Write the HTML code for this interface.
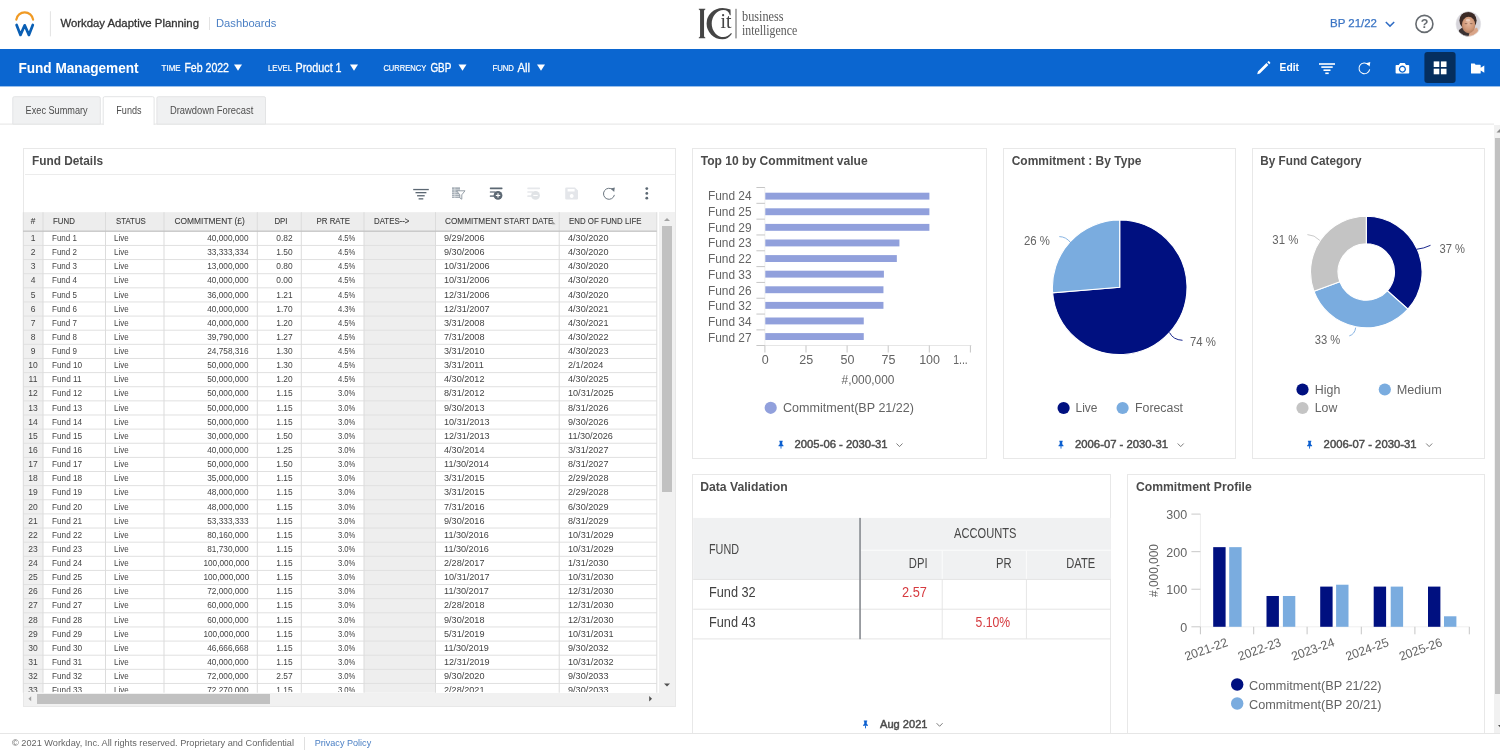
<!DOCTYPE html>
<html><head><meta charset="utf-8"><title>Fund Management</title>
<style>
*{margin:0;padding:0;box-sizing:border-box}
html,body{width:1500px;height:750px;overflow:hidden;background:#fff}
body{will-change:transform;font-family:"Liberation Sans",sans-serif;position:relative;color:#494949}
.abs{position:absolute}
.t{position:absolute;white-space:nowrap;line-height:1}
.panel{position:absolute;border:1px solid #e8e8e8;background:#fff}
.ptitle{position:absolute;white-space:nowrap;font-weight:bold;font-size:12.5px;color:#494949;line-height:14px}
.gt{position:absolute;white-space:nowrap;font-size:8.5px;line-height:10px;color:#444}
.gh{position:absolute;white-space:nowrap;font-size:8.2px;line-height:10px;color:#3d3d3d;-webkit-text-stroke:0.1px #3d3d3d}
.gl{position:absolute;left:24px;width:633px;height:1px;background:#e2e2e2}
.gv{position:absolute;width:1px;background:#dedede}
svg{position:absolute;left:0;top:0;overflow:visible}
svg text{font-family:"Liberation Sans",sans-serif}
</style></head><body>
<!-- top header -->
<div class="abs" style="left:0;top:0;width:1500px;height:49px;background:#fff"></div>
<svg width="1500" height="49" viewBox="0 0 1500 49">
  <!-- workday logo -->
  <path d="M16.3 19.6 A8.5 8.5 0 0 1 33.1 19.6" fill="none" stroke="#f09a24" stroke-width="2.2" stroke-linecap="round"/>
  <path d="M16.6 24.9 L20.5 34.9 L24.7 25.3 L28.9 34.9 L32.8 24.9" fill="none" stroke="#0a5fb4" stroke-width="2.7" stroke-linejoin="round" stroke-linecap="round"/>
  <rect x="49.9" y="11.2" width="1" height="25.2" fill="#e3e3e3"/>
  <rect x="209" y="17" width="1" height="13" fill="#e3e3e3"/>
  <!-- ICit logo -->
  <g fill="#454545">
   <path d="M698.8 8.8 h6.5 v0.7 q-1.25 0.25 -1.25 1.5 v25 q0 1.25 1.25 1.5 v0.7 h-6.5 v-0.7 q1.25 -0.25 1.25 -1.5 v-25 q0 -1.25 -1.25 -1.5 z"/>
   <path d="M730.7 15.2 L730.5 9.5 Q726.5 8 722.5 8 A15.9 15.6 0 0 0 722.5 39.2 Q728.2 39.2 731.9 33.7 L731.1 33.1 Q727.6 37.1 723.6 37.1 A11.9 13.5 0 0 1 723.6 10.1 Q728.2 10.1 729.9 15.2 Z"/>
   <text x="720.6" y="28.4" style="font-family:'Liberation Serif',serif" font-size="20" textLength="11" lengthAdjust="spacingAndGlyphs">it</text>
   <rect x="735.4" y="8.8" width="1.2" height="29.6" fill="#7a7a7a"/>
   <text x="742" y="21.4" style="font-family:'Liberation Serif',serif" font-size="13.6" textLength="41.6" lengthAdjust="spacingAndGlyphs" fill="#5a5a5a">business</text>
   <text x="742" y="35.2" style="font-family:'Liberation Serif',serif" font-size="13.6" textLength="55.2" lengthAdjust="spacingAndGlyphs" fill="#5a5a5a">intelligence</text>
  </g>
  <!-- chevron -->
  <path d="M1385.8 21.9 L1390 26.1 L1394.2 21.9" fill="none" stroke="#2f6cc4" stroke-width="1.45"/>
  <!-- help -->
  <circle cx="1424.4" cy="23.9" r="8.5" fill="none" stroke="#666b70" stroke-width="1.6"/>
  <text x="1424.5" y="28.4" font-size="12.5" font-weight="bold" text-anchor="middle" fill="#666b70">?</text>
  <!-- avatar -->
  <defs><clipPath id="av"><circle cx="1468.35" cy="24" r="12.4"/></clipPath>
  <radialGradient id="avg" cx="0.5" cy="0.4" r="0.65"><stop offset="0" stop-color="#e6b9a0"/><stop offset="0.6" stop-color="#d09878"/><stop offset="1" stop-color="#a8755a"/></radialGradient>
  <filter id="avb" x="-20%" y="-20%" width="140%" height="140%"><feGaussianBlur stdDeviation="0.7"/></filter></defs>
  <g clip-path="url(#av)"><g filter="url(#avb)">
    <rect x="1454" y="10" width="29" height="29" fill="#d6d4da"/>
    <ellipse cx="1468" cy="20.5" rx="8.6" ry="9" fill="#3a2a25"/>
    <path d="M1459 30 L1463 27 L1469 33 L1476 29 L1479 38 L1458 38 z" fill="#3a3233"/>
    <path d="M1468 38 L1470 31 L1477 27.5 L1479 33 L1474 38 z" fill="#d9a588"/>
    <ellipse cx="1468.6" cy="25" rx="6.7" ry="8.3" fill="url(#avg)"/>
    <ellipse cx="1468" cy="20.3" rx="2.2" ry="1.2" fill="#f0d5c6" opacity="0.8"/>
    <ellipse cx="1466" cy="23.6" rx="1.5" ry="0.7" fill="#7a5444" opacity="0.7"/>
    <ellipse cx="1471.2" cy="23.6" rx="1.5" ry="0.7" fill="#7a5444" opacity="0.7"/>
  </g></g>
  <circle cx="1468.35" cy="24" r="12.4" fill="none" stroke="#e6e6ea" stroke-width="0.6"/>
</svg>

<!-- blue bar -->
<div class="abs" style="left:0;top:49px;width:1500px;height:37px;background:#0b66d0"></div>
<div class="abs" style="left:0;top:86px;width:1500px;height:1px;background:#9ac0eb"></div>
<svg width="1500" height="90" viewBox="0 0 1500 90">
  <g fill="#fff">
    <path d="M234 64.5 h8 l-4 6.2 z"/>
    <path d="M350 64.5 h8 l-4 6.2 z"/>
    <path d="M458.5 64.5 h8 l-4 6.2 z"/>
    <path d="M537 64.5 h8 l-4 6.2 z"/>
    <!-- pencil -->
    <path d="M1257.2 74.3 l0.75 -2.75 l8.5 -8.5 l1.9 1.9 l-8.5 8.5 z M1267.3 62.2 l0.95 -0.95 a0.55 0.55 0 0 1 0.8 0 l1.15 1.15 a0.55 0.55 0 0 1 0 0.8 l-0.95 0.95 z"/>
    <!-- filter -->
    <rect x="1319" y="63.2" width="16" height="1.6"/><rect x="1321.3" y="66.3" width="11.4" height="1.6"/><rect x="1323.5" y="69.4" width="7" height="1.6"/><rect x="1325.3" y="72.5" width="3.4" height="1.6"/>
    <!-- grid bg -->
    <rect x="1424.4" y="52" width="31.2" height="31" rx="3" fill="#052e5e"/>
    <rect x="1433.7" y="61.4" width="5.6" height="5.6"/><rect x="1440.9" y="61.4" width="5.6" height="5.6"/><rect x="1433.7" y="68.7" width="5.6" height="5.6"/><rect x="1440.9" y="68.7" width="5.6" height="5.6"/>
    <!-- camera -->
    <path fill-rule="evenodd" d="M1396.4 65 h2.4 l1.3 -2 h4.6 l1.3 2 h2.4 a0.8 0.8 0 0 1 0.8 0.8 v7 a0.8 0.8 0 0 1 -0.8 0.8 h-12 a0.8 0.8 0 0 1 -0.8 -0.8 v-7 a0.8 0.8 0 0 1 0.8 -0.8 z M1402.4 65.6 a3.6 3.6 0 1 0 0.01 0 z M1402.4 66.9 a2.3 2.3 0 1 1 -0.01 0 z"/>
    <!-- video -->
    <path d="M1471 63.5 h3.6 l1 1.3 h4.4 a0.7 0.7 0 0 1 0.7 0.7 v2.2 l3.6 -2.3 v7.4 l-3.6 -2.3 v2.4 a0.7 0.7 0 0 1 -0.7 0.7 h-8.3 a0.7 0.7 0 0 1 -0.7 -0.7 z"/>
  </g>
  <!-- refresh -->
  <path d="M1368.3 64.6 A5.4 5.4 0 1 0 1369.7 69.4" fill="none" stroke="#fff" stroke-width="1.05"/>
  <path d="M1366 63.2 l4.3 -1.2 l-0.7 4.6 z" fill="#fff"/>
</svg>

<!-- tabs -->
<svg width="1500" height="130" viewBox="0 0 1500 130">
 <rect x="0" y="123.6" width="1494" height="1" fill="#e4e4e4"/>
 <path d="M12.8 124.1 V98.2 a1.5 1.5 0 0 1 1.5 -1.5 H98.8 a1.5 1.5 0 0 1 1.5 1.5 V124.1 z" fill="#f0f1f2" stroke="#e3e4e5" stroke-width="1"/>
 <path d="M156.9 124.1 V98.2 a1.5 1.5 0 0 1 1.5 -1.5 H264 a1.5 1.5 0 0 1 1.5 1.5 V124.1 z" fill="#f0f1f2" stroke="#e3e4e5" stroke-width="1"/>
 <path d="M103.2 125 V98.2 a1.5 1.5 0 0 1 1.5 -1.5 H152.6 a1.5 1.5 0 0 1 1.5 1.5 V125" fill="#fff" stroke="#e3e4e5" stroke-width="1"/>
</svg>
<svg width="1500" height="130" viewBox="0 0 1500 130">
 <g font-family="Liberation Sans" lengthAdjust="spacingAndGlyphs">
  <text x="60.4" y="26.9" font-size="11.4" fill="#333" stroke="#333" stroke-width="0.3" textLength="138.6" lengthAdjust="spacingAndGlyphs">Workday Adaptive Planning</text>
  <text x="216" y="26.9" font-size="11.4" fill="#4a7fc4" textLength="60.4" lengthAdjust="spacingAndGlyphs">Dashboards</text>
  <text x="1330" y="27.4" font-size="11.6" fill="#3a74c4" stroke="#3a74c4" stroke-width="0.25" textLength="47" lengthAdjust="spacingAndGlyphs">BP 21/22</text>
  <text x="18.4" y="72.5" font-size="14.8" font-weight="bold" fill="#fff" textLength="120.2" lengthAdjust="spacingAndGlyphs">Fund Management</text>
  <text x="161.6" y="71.3" font-size="9.2" fill="#fff" stroke="#fff" stroke-width="0.2" textLength="19" lengthAdjust="spacingAndGlyphs">TIME</text>
  <text x="184.4" y="72" font-size="12.2" fill="#fff" stroke="#fff" stroke-width="0.3" textLength="44.6" lengthAdjust="spacingAndGlyphs">Feb 2022</text>
  <text x="268" y="71.3" font-size="9.2" fill="#fff" stroke="#fff" stroke-width="0.2" textLength="24" lengthAdjust="spacingAndGlyphs">LEVEL</text>
  <text x="295.6" y="72" font-size="12.2" fill="#fff" stroke="#fff" stroke-width="0.3" textLength="46" lengthAdjust="spacingAndGlyphs">Product 1</text>
  <text x="383.4" y="71.3" font-size="9.2" fill="#fff" stroke="#fff" stroke-width="0.2" textLength="43" lengthAdjust="spacingAndGlyphs">CURRENCY</text>
  <text x="430.4" y="72" font-size="12.2" fill="#fff" stroke="#fff" stroke-width="0.3" textLength="21" lengthAdjust="spacingAndGlyphs">GBP</text>
  <text x="492.4" y="71.3" font-size="9.2" fill="#fff" stroke="#fff" stroke-width="0.2" textLength="21.6" lengthAdjust="spacingAndGlyphs">FUND</text>
  <text x="517.4" y="72" font-size="12.2" fill="#fff" stroke="#fff" stroke-width="0.3" textLength="12.6" lengthAdjust="spacingAndGlyphs">All</text>
  <text x="1279.6" y="71.2" font-size="11.6" font-weight="bold" fill="#fff" textLength="19.4" lengthAdjust="spacingAndGlyphs">Edit</text>
  <text x="25.6" y="113.6" font-size="10" fill="#4d4d4d" textLength="62.1" lengthAdjust="spacingAndGlyphs">Exec Summary</text>
  <text x="116.3" y="113.6" font-size="10" fill="#4d4d4d" textLength="25.2" lengthAdjust="spacingAndGlyphs">Funds</text>
  <text x="169.9" y="113.6" font-size="10" fill="#4d4d4d" textLength="83.4" lengthAdjust="spacingAndGlyphs">Drawdown Forecast</text>
 </g>
</svg>
<!-- panels -->
<div class="panel" style="left:23px;top:148px;width:653px;height:559px"></div>
<div class="panel" style="left:691.5px;top:148px;width:295.5px;height:310.5px"></div>
<div class="panel" style="left:1003px;top:148px;width:233px;height:310.5px"></div>
<div class="panel" style="left:1252px;top:148px;width:233px;height:310.5px"></div>
<div class="panel" style="left:692px;top:474px;width:419px;height:280px"></div>
<div class="panel" style="left:1127px;top:474px;width:358px;height:280px"></div>
<svg width="1500" height="500" viewBox="0 0 1500 500"><g font-family="Liberation Sans" font-weight="bold" font-size="13.4" fill="#4b4b4b">
<text x="32" y="164.6" textLength="71" lengthAdjust="spacingAndGlyphs">Fund Details</text>
<text x="700.7" y="164.6" textLength="167" lengthAdjust="spacingAndGlyphs">Top 10 by Commitment value</text>
<text x="1011.7" y="164.6" textLength="129.7" lengthAdjust="spacingAndGlyphs">Commitment : By Type</text>
<text x="1260.3" y="164.6" textLength="101.2" lengthAdjust="spacingAndGlyphs">By Fund Category</text>
<text x="700.2" y="490.9" textLength="87.4" lengthAdjust="spacingAndGlyphs">Data Validation</text>
<text x="1135.9" y="490.9" textLength="115.9" lengthAdjust="spacingAndGlyphs">Commitment Profile</text>
</g></svg>
<div class="abs" style="left:24.5px;top:173.5px;width:650.5px;height:1px;background:#ececec"></div>
<!-- toolbar icons -->
<svg width="700" height="215" viewBox="0 0 700 215">
  <g fill="#5c6873">
    <rect x="413.2" y="188.9" width="15.6" height="1.3"/><rect x="415.5" y="192" width="10.9" height="1.3"/><rect x="417.1" y="195.1" width="7.6" height="1.3"/><rect x="418.6" y="198.2" width="4.7" height="1.3"/>
  </g>
  <!-- filter edit -->
  <g>
    <rect x="452" y="187.3" width="8" height="10.7" fill="#a7afb7"/>
    <g fill="#eceef0"><rect x="452" y="189.6" width="8" height="0.6"/><rect x="452" y="191.9" width="8" height="0.6"/><rect x="452" y="194.2" width="8" height="0.6"/><rect x="452" y="196.3" width="8" height="0.6"/><rect x="454.6" y="187.3" width="0.6" height="10.7"/></g>
    <path d="M456.6 190.8 h8.4 l-3.2 4 v4.4 l-2 -1.3 v-3.1 z" fill="#fff" stroke="#8a949e" stroke-width="0.9" stroke-linejoin="round"/>
  </g>
  <!-- add row -->
  <g fill="#5c6873">
    <rect x="489.8" y="187.5" width="12.7" height="1.7" rx="0.6"/><rect x="489.8" y="191.2" width="6" height="1.6" rx="0.5" fill="#7d8791"/><rect x="489.8" y="195.3" width="4.5" height="1.7" rx="0.5" fill="#7d8791"/>
    <circle cx="498" cy="195.4" r="4.4"/>
    <rect x="495.8" y="194.9" width="4.4" height="1.1" fill="#fff"/><rect x="497.45" y="193.2" width="1.1" height="4.4" fill="#fff"/>
  </g>
  <!-- remove row (disabled) -->
  <g fill="#e6e8eb">
    <rect x="527.3" y="187.5" width="12.7" height="1.7" rx="0.6"/><rect x="527.3" y="191.2" width="6" height="1.6" rx="0.5"/><rect x="527.3" y="195.3" width="4.5" height="1.7" rx="0.5"/>
    <circle cx="535.5" cy="195.4" r="4.4" fill="#e0e3e6"/>
    <rect x="533.3" y="194.9" width="4.4" height="1.1" fill="#fff"/>
  </g>
  <!-- save (disabled) -->
  <path fill-rule="evenodd" d="M566.2 187.4 h8.8 l3 3 v8 a1 1 0 0 1 -1 1 h-10.8 a1 1 0 0 1 -1 -1 v-10 a1 1 0 0 1 1 -1 z M567.6 188.9 v2.6 h7 v-2.6 z M571.7 194.1 a1.9 1.9 0 1 0 0.01 0 z" fill="#e4e6ea"/>
  <!-- refresh -->
  <path d="M612.9 189.9 A5.5 5.5 0 1 0 614.4 194.9" fill="none" stroke="#6b7680" stroke-width="1"/>
  <path d="M610.6 188.5 l4.2 -1.1 l-0.6 4.5 z" fill="#6b7680"/>
  <!-- more -->
  <g fill="#5c6873"><circle cx="646.8" cy="188.6" r="1.4"/><circle cx="646.8" cy="193.4" r="1.4"/><circle cx="646.8" cy="198.2" r="1.4"/></g>
</svg>
<svg width="700" height="750" viewBox="0 0 700 750">
<rect x="23" y="212.2" width="633.8" height="19.1" fill="#ededed"/>
<rect x="23" y="231.3" width="20" height="461.4" fill="#f0f0f0"/>
<rect x="364" y="231.3" width="71.5" height="461.4" fill="#eeeeee"/>
<rect x="23" y="244.93" width="633.8" height="1" fill="#e0e0e0"/>
<rect x="23" y="259.06" width="633.8" height="1" fill="#e0e0e0"/>
<rect x="23" y="273.19" width="633.8" height="1" fill="#e0e0e0"/>
<rect x="23" y="287.32" width="633.8" height="1" fill="#e0e0e0"/>
<rect x="23" y="301.45" width="633.8" height="1" fill="#e0e0e0"/>
<rect x="23" y="315.58" width="633.8" height="1" fill="#e0e0e0"/>
<rect x="23" y="329.71" width="633.8" height="1" fill="#e0e0e0"/>
<rect x="23" y="343.84" width="633.8" height="1" fill="#e0e0e0"/>
<rect x="23" y="357.97" width="633.8" height="1" fill="#e0e0e0"/>
<rect x="23" y="372.10" width="633.8" height="1" fill="#e0e0e0"/>
<rect x="23" y="386.23" width="633.8" height="1" fill="#e0e0e0"/>
<rect x="23" y="400.36" width="633.8" height="1" fill="#e0e0e0"/>
<rect x="23" y="414.49" width="633.8" height="1" fill="#e0e0e0"/>
<rect x="23" y="428.62" width="633.8" height="1" fill="#e0e0e0"/>
<rect x="23" y="442.75" width="633.8" height="1" fill="#e0e0e0"/>
<rect x="23" y="456.88" width="633.8" height="1" fill="#e0e0e0"/>
<rect x="23" y="471.01" width="633.8" height="1" fill="#e0e0e0"/>
<rect x="23" y="485.14" width="633.8" height="1" fill="#e0e0e0"/>
<rect x="23" y="499.27" width="633.8" height="1" fill="#e0e0e0"/>
<rect x="23" y="513.40" width="633.8" height="1" fill="#e0e0e0"/>
<rect x="23" y="527.53" width="633.8" height="1" fill="#e0e0e0"/>
<rect x="23" y="541.66" width="633.8" height="1" fill="#e0e0e0"/>
<rect x="23" y="555.79" width="633.8" height="1" fill="#e0e0e0"/>
<rect x="23" y="569.92" width="633.8" height="1" fill="#e0e0e0"/>
<rect x="23" y="584.05" width="633.8" height="1" fill="#e0e0e0"/>
<rect x="23" y="598.18" width="633.8" height="1" fill="#e0e0e0"/>
<rect x="23" y="612.31" width="633.8" height="1" fill="#e0e0e0"/>
<rect x="23" y="626.44" width="633.8" height="1" fill="#e0e0e0"/>
<rect x="23" y="640.57" width="633.8" height="1" fill="#e0e0e0"/>
<rect x="23" y="654.70" width="633.8" height="1" fill="#e0e0e0"/>
<rect x="23" y="668.83" width="633.8" height="1" fill="#e0e0e0"/>
<rect x="23" y="682.96" width="633.8" height="1" fill="#e0e0e0"/>
<rect x="22.8" y="212.2" width="1" height="480.5" fill="#dcdcdc"/>
<rect x="42.5" y="212.2" width="1" height="480.5" fill="#dcdcdc"/>
<rect x="105" y="212.2" width="1" height="480.5" fill="#dcdcdc"/>
<rect x="163.5" y="212.2" width="1" height="480.5" fill="#dcdcdc"/>
<rect x="256.8" y="212.2" width="1" height="480.5" fill="#dcdcdc"/>
<rect x="300.8" y="212.2" width="1" height="480.5" fill="#dcdcdc"/>
<rect x="363.5" y="212.2" width="1" height="480.5" fill="#dcdcdc"/>
<rect x="435" y="212.2" width="1" height="480.5" fill="#dcdcdc"/>
<rect x="558.7" y="212.2" width="1" height="480.5" fill="#dcdcdc"/>
<rect x="656.3" y="212.2" width="1" height="480.5" fill="#dcdcdc"/>
<rect x="23" y="230.55" width="633.8" height="1.3" fill="#c4c4c4"/>
</svg>
<div id="grid" style="position:absolute;left:0;top:231.3px;width:657.8px;height:460.5px;overflow:hidden">
<span class="gt" style="top:1.77px;left:23px;width:20px;text-align:center">1</span>
<span class="gt" style="top:1.77px;left:51.6px;transform:scaleX(0.94);transform-origin:left">Fund 1</span>
<span class="gt" style="top:1.77px;left:114.4px;transform:scaleX(0.94);transform-origin:left">Live</span>
<span class="gt" style="top:1.77px;right:408.8px;transform:scaleX(0.97);transform-origin:right">40,000,000</span>
<span class="gt" style="top:1.77px;right:364.8px;transform:scaleX(0.985);transform-origin:right">0.82</span>
<span class="gt" style="top:1.77px;right:302.1px;transform:scaleX(0.9);transform-origin:right">4.5%</span>
<span class="gt" style="top:1.77px;left:444px;transform:scaleX(1.07);transform-origin:left">9/29/2006</span>
<span class="gt" style="top:1.77px;left:568px;transform:scaleX(1.07);transform-origin:left">4/30/2020</span>
<span class="gt" style="top:15.89px;left:23px;width:20px;text-align:center">2</span>
<span class="gt" style="top:15.89px;left:51.6px;transform:scaleX(0.94);transform-origin:left">Fund 2</span>
<span class="gt" style="top:15.89px;left:114.4px;transform:scaleX(0.94);transform-origin:left">Live</span>
<span class="gt" style="top:15.89px;right:408.8px;transform:scaleX(0.97);transform-origin:right">33,333,334</span>
<span class="gt" style="top:15.89px;right:364.8px;transform:scaleX(0.985);transform-origin:right">1.50</span>
<span class="gt" style="top:15.89px;right:302.1px;transform:scaleX(0.9);transform-origin:right">4.5%</span>
<span class="gt" style="top:15.89px;left:444px;transform:scaleX(1.07);transform-origin:left">9/30/2006</span>
<span class="gt" style="top:15.89px;left:568px;transform:scaleX(1.07);transform-origin:left">4/30/2020</span>
<span class="gt" style="top:30.03px;left:23px;width:20px;text-align:center">3</span>
<span class="gt" style="top:30.03px;left:51.6px;transform:scaleX(0.94);transform-origin:left">Fund 3</span>
<span class="gt" style="top:30.03px;left:114.4px;transform:scaleX(0.94);transform-origin:left">Live</span>
<span class="gt" style="top:30.03px;right:408.8px;transform:scaleX(0.97);transform-origin:right">13,000,000</span>
<span class="gt" style="top:30.03px;right:364.8px;transform:scaleX(0.985);transform-origin:right">0.80</span>
<span class="gt" style="top:30.03px;right:302.1px;transform:scaleX(0.9);transform-origin:right">4.5%</span>
<span class="gt" style="top:30.03px;left:444px;transform:scaleX(1.07);transform-origin:left">10/31/2006</span>
<span class="gt" style="top:30.03px;left:568px;transform:scaleX(1.07);transform-origin:left">4/30/2020</span>
<span class="gt" style="top:44.16px;left:23px;width:20px;text-align:center">4</span>
<span class="gt" style="top:44.16px;left:51.6px;transform:scaleX(0.94);transform-origin:left">Fund 4</span>
<span class="gt" style="top:44.16px;left:114.4px;transform:scaleX(0.94);transform-origin:left">Live</span>
<span class="gt" style="top:44.16px;right:408.8px;transform:scaleX(0.97);transform-origin:right">40,000,000</span>
<span class="gt" style="top:44.16px;right:364.8px;transform:scaleX(0.985);transform-origin:right">0.00</span>
<span class="gt" style="top:44.16px;right:302.1px;transform:scaleX(0.9);transform-origin:right">4.5%</span>
<span class="gt" style="top:44.16px;left:444px;transform:scaleX(1.07);transform-origin:left">10/31/2006</span>
<span class="gt" style="top:44.16px;left:568px;transform:scaleX(1.07);transform-origin:left">4/30/2020</span>
<span class="gt" style="top:58.29px;left:23px;width:20px;text-align:center">5</span>
<span class="gt" style="top:58.29px;left:51.6px;transform:scaleX(0.94);transform-origin:left">Fund 5</span>
<span class="gt" style="top:58.29px;left:114.4px;transform:scaleX(0.94);transform-origin:left">Live</span>
<span class="gt" style="top:58.29px;right:408.8px;transform:scaleX(0.97);transform-origin:right">36,000,000</span>
<span class="gt" style="top:58.29px;right:364.8px;transform:scaleX(0.985);transform-origin:right">1.21</span>
<span class="gt" style="top:58.29px;right:302.1px;transform:scaleX(0.9);transform-origin:right">4.5%</span>
<span class="gt" style="top:58.29px;left:444px;transform:scaleX(1.07);transform-origin:left">12/31/2006</span>
<span class="gt" style="top:58.29px;left:568px;transform:scaleX(1.07);transform-origin:left">4/30/2020</span>
<span class="gt" style="top:72.42px;left:23px;width:20px;text-align:center">6</span>
<span class="gt" style="top:72.42px;left:51.6px;transform:scaleX(0.94);transform-origin:left">Fund 6</span>
<span class="gt" style="top:72.42px;left:114.4px;transform:scaleX(0.94);transform-origin:left">Live</span>
<span class="gt" style="top:72.42px;right:408.8px;transform:scaleX(0.97);transform-origin:right">40,000,000</span>
<span class="gt" style="top:72.42px;right:364.8px;transform:scaleX(0.985);transform-origin:right">1.70</span>
<span class="gt" style="top:72.42px;right:302.1px;transform:scaleX(0.9);transform-origin:right">4.3%</span>
<span class="gt" style="top:72.42px;left:444px;transform:scaleX(1.07);transform-origin:left">12/31/2007</span>
<span class="gt" style="top:72.42px;left:568px;transform:scaleX(1.07);transform-origin:left">4/30/2021</span>
<span class="gt" style="top:86.55px;left:23px;width:20px;text-align:center">7</span>
<span class="gt" style="top:86.55px;left:51.6px;transform:scaleX(0.94);transform-origin:left">Fund 7</span>
<span class="gt" style="top:86.55px;left:114.4px;transform:scaleX(0.94);transform-origin:left">Live</span>
<span class="gt" style="top:86.55px;right:408.8px;transform:scaleX(0.97);transform-origin:right">40,000,000</span>
<span class="gt" style="top:86.55px;right:364.8px;transform:scaleX(0.985);transform-origin:right">1.20</span>
<span class="gt" style="top:86.55px;right:302.1px;transform:scaleX(0.9);transform-origin:right">4.5%</span>
<span class="gt" style="top:86.55px;left:444px;transform:scaleX(1.07);transform-origin:left">3/31/2008</span>
<span class="gt" style="top:86.55px;left:568px;transform:scaleX(1.07);transform-origin:left">4/30/2021</span>
<span class="gt" style="top:100.68px;left:23px;width:20px;text-align:center">8</span>
<span class="gt" style="top:100.68px;left:51.6px;transform:scaleX(0.94);transform-origin:left">Fund 8</span>
<span class="gt" style="top:100.68px;left:114.4px;transform:scaleX(0.94);transform-origin:left">Live</span>
<span class="gt" style="top:100.68px;right:408.8px;transform:scaleX(0.97);transform-origin:right">39,790,000</span>
<span class="gt" style="top:100.68px;right:364.8px;transform:scaleX(0.985);transform-origin:right">1.27</span>
<span class="gt" style="top:100.68px;right:302.1px;transform:scaleX(0.9);transform-origin:right">4.5%</span>
<span class="gt" style="top:100.68px;left:444px;transform:scaleX(1.07);transform-origin:left">7/31/2008</span>
<span class="gt" style="top:100.68px;left:568px;transform:scaleX(1.07);transform-origin:left">4/30/2022</span>
<span class="gt" style="top:114.81px;left:23px;width:20px;text-align:center">9</span>
<span class="gt" style="top:114.81px;left:51.6px;transform:scaleX(0.94);transform-origin:left">Fund 9</span>
<span class="gt" style="top:114.81px;left:114.4px;transform:scaleX(0.94);transform-origin:left">Live</span>
<span class="gt" style="top:114.81px;right:408.8px;transform:scaleX(0.97);transform-origin:right">24,758,316</span>
<span class="gt" style="top:114.81px;right:364.8px;transform:scaleX(0.985);transform-origin:right">1.30</span>
<span class="gt" style="top:114.81px;right:302.1px;transform:scaleX(0.9);transform-origin:right">4.5%</span>
<span class="gt" style="top:114.81px;left:444px;transform:scaleX(1.07);transform-origin:left">3/31/2010</span>
<span class="gt" style="top:114.81px;left:568px;transform:scaleX(1.07);transform-origin:left">4/30/2023</span>
<span class="gt" style="top:128.94px;left:23px;width:20px;text-align:center">10</span>
<span class="gt" style="top:128.94px;left:51.6px;transform:scaleX(0.968);transform-origin:left">Fund 10</span>
<span class="gt" style="top:128.94px;left:114.4px;transform:scaleX(0.94);transform-origin:left">Live</span>
<span class="gt" style="top:128.94px;right:408.8px;transform:scaleX(0.97);transform-origin:right">50,000,000</span>
<span class="gt" style="top:128.94px;right:364.8px;transform:scaleX(0.985);transform-origin:right">1.30</span>
<span class="gt" style="top:128.94px;right:302.1px;transform:scaleX(0.9);transform-origin:right">4.5%</span>
<span class="gt" style="top:128.94px;left:444px;transform:scaleX(1.07);transform-origin:left">3/31/2011</span>
<span class="gt" style="top:128.94px;left:568px;transform:scaleX(1.07);transform-origin:left">2/1/2024</span>
<span class="gt" style="top:143.06px;left:23px;width:20px;text-align:center">11</span>
<span class="gt" style="top:143.06px;left:51.6px;transform:scaleX(0.968);transform-origin:left">Fund 11</span>
<span class="gt" style="top:143.06px;left:114.4px;transform:scaleX(0.94);transform-origin:left">Live</span>
<span class="gt" style="top:143.06px;right:408.8px;transform:scaleX(0.97);transform-origin:right">50,000,000</span>
<span class="gt" style="top:143.06px;right:364.8px;transform:scaleX(0.985);transform-origin:right">1.20</span>
<span class="gt" style="top:143.06px;right:302.1px;transform:scaleX(0.9);transform-origin:right">4.5%</span>
<span class="gt" style="top:143.06px;left:444px;transform:scaleX(1.07);transform-origin:left">4/30/2012</span>
<span class="gt" style="top:143.06px;left:568px;transform:scaleX(1.07);transform-origin:left">4/30/2025</span>
<span class="gt" style="top:157.19px;left:23px;width:20px;text-align:center">12</span>
<span class="gt" style="top:157.19px;left:51.6px;transform:scaleX(0.968);transform-origin:left">Fund 12</span>
<span class="gt" style="top:157.19px;left:114.4px;transform:scaleX(0.94);transform-origin:left">Live</span>
<span class="gt" style="top:157.19px;right:408.8px;transform:scaleX(0.97);transform-origin:right">50,000,000</span>
<span class="gt" style="top:157.19px;right:364.8px;transform:scaleX(0.985);transform-origin:right">1.15</span>
<span class="gt" style="top:157.19px;right:302.1px;transform:scaleX(0.9);transform-origin:right">3.0%</span>
<span class="gt" style="top:157.19px;left:444px;transform:scaleX(1.07);transform-origin:left">8/31/2012</span>
<span class="gt" style="top:157.19px;left:568px;transform:scaleX(1.07);transform-origin:left">10/31/2025</span>
<span class="gt" style="top:171.32px;left:23px;width:20px;text-align:center">13</span>
<span class="gt" style="top:171.32px;left:51.6px;transform:scaleX(0.968);transform-origin:left">Fund 13</span>
<span class="gt" style="top:171.32px;left:114.4px;transform:scaleX(0.94);transform-origin:left">Live</span>
<span class="gt" style="top:171.32px;right:408.8px;transform:scaleX(0.97);transform-origin:right">50,000,000</span>
<span class="gt" style="top:171.32px;right:364.8px;transform:scaleX(0.985);transform-origin:right">1.15</span>
<span class="gt" style="top:171.32px;right:302.1px;transform:scaleX(0.9);transform-origin:right">3.0%</span>
<span class="gt" style="top:171.32px;left:444px;transform:scaleX(1.07);transform-origin:left">9/30/2013</span>
<span class="gt" style="top:171.32px;left:568px;transform:scaleX(1.07);transform-origin:left">8/31/2026</span>
<span class="gt" style="top:185.45px;left:23px;width:20px;text-align:center">14</span>
<span class="gt" style="top:185.45px;left:51.6px;transform:scaleX(0.968);transform-origin:left">Fund 14</span>
<span class="gt" style="top:185.45px;left:114.4px;transform:scaleX(0.94);transform-origin:left">Live</span>
<span class="gt" style="top:185.45px;right:408.8px;transform:scaleX(0.97);transform-origin:right">50,000,000</span>
<span class="gt" style="top:185.45px;right:364.8px;transform:scaleX(0.985);transform-origin:right">1.15</span>
<span class="gt" style="top:185.45px;right:302.1px;transform:scaleX(0.9);transform-origin:right">3.0%</span>
<span class="gt" style="top:185.45px;left:444px;transform:scaleX(1.07);transform-origin:left">10/31/2013</span>
<span class="gt" style="top:185.45px;left:568px;transform:scaleX(1.07);transform-origin:left">9/30/2026</span>
<span class="gt" style="top:199.59px;left:23px;width:20px;text-align:center">15</span>
<span class="gt" style="top:199.59px;left:51.6px;transform:scaleX(0.968);transform-origin:left">Fund 15</span>
<span class="gt" style="top:199.59px;left:114.4px;transform:scaleX(0.94);transform-origin:left">Live</span>
<span class="gt" style="top:199.59px;right:408.8px;transform:scaleX(0.97);transform-origin:right">30,000,000</span>
<span class="gt" style="top:199.59px;right:364.8px;transform:scaleX(0.985);transform-origin:right">1.50</span>
<span class="gt" style="top:199.59px;right:302.1px;transform:scaleX(0.9);transform-origin:right">3.0%</span>
<span class="gt" style="top:199.59px;left:444px;transform:scaleX(1.07);transform-origin:left">12/31/2013</span>
<span class="gt" style="top:199.59px;left:568px;transform:scaleX(1.07);transform-origin:left">11/30/2026</span>
<span class="gt" style="top:213.72px;left:23px;width:20px;text-align:center">16</span>
<span class="gt" style="top:213.72px;left:51.6px;transform:scaleX(0.968);transform-origin:left">Fund 16</span>
<span class="gt" style="top:213.72px;left:114.4px;transform:scaleX(0.94);transform-origin:left">Live</span>
<span class="gt" style="top:213.72px;right:408.8px;transform:scaleX(0.97);transform-origin:right">40,000,000</span>
<span class="gt" style="top:213.72px;right:364.8px;transform:scaleX(0.985);transform-origin:right">1.25</span>
<span class="gt" style="top:213.72px;right:302.1px;transform:scaleX(0.9);transform-origin:right">3.0%</span>
<span class="gt" style="top:213.72px;left:444px;transform:scaleX(1.07);transform-origin:left">4/30/2014</span>
<span class="gt" style="top:213.72px;left:568px;transform:scaleX(1.07);transform-origin:left">3/31/2027</span>
<span class="gt" style="top:227.84px;left:23px;width:20px;text-align:center">17</span>
<span class="gt" style="top:227.84px;left:51.6px;transform:scaleX(0.968);transform-origin:left">Fund 17</span>
<span class="gt" style="top:227.84px;left:114.4px;transform:scaleX(0.94);transform-origin:left">Live</span>
<span class="gt" style="top:227.84px;right:408.8px;transform:scaleX(0.97);transform-origin:right">50,000,000</span>
<span class="gt" style="top:227.84px;right:364.8px;transform:scaleX(0.985);transform-origin:right">1.50</span>
<span class="gt" style="top:227.84px;right:302.1px;transform:scaleX(0.9);transform-origin:right">3.0%</span>
<span class="gt" style="top:227.84px;left:444px;transform:scaleX(1.07);transform-origin:left">11/30/2014</span>
<span class="gt" style="top:227.84px;left:568px;transform:scaleX(1.07);transform-origin:left">8/31/2027</span>
<span class="gt" style="top:241.97px;left:23px;width:20px;text-align:center">18</span>
<span class="gt" style="top:241.97px;left:51.6px;transform:scaleX(0.968);transform-origin:left">Fund 18</span>
<span class="gt" style="top:241.97px;left:114.4px;transform:scaleX(0.94);transform-origin:left">Live</span>
<span class="gt" style="top:241.97px;right:408.8px;transform:scaleX(0.97);transform-origin:right">35,000,000</span>
<span class="gt" style="top:241.97px;right:364.8px;transform:scaleX(0.985);transform-origin:right">1.15</span>
<span class="gt" style="top:241.97px;right:302.1px;transform:scaleX(0.9);transform-origin:right">3.0%</span>
<span class="gt" style="top:241.97px;left:444px;transform:scaleX(1.07);transform-origin:left">3/31/2015</span>
<span class="gt" style="top:241.97px;left:568px;transform:scaleX(1.07);transform-origin:left">2/29/2028</span>
<span class="gt" style="top:256.11px;left:23px;width:20px;text-align:center">19</span>
<span class="gt" style="top:256.11px;left:51.6px;transform:scaleX(0.968);transform-origin:left">Fund 19</span>
<span class="gt" style="top:256.11px;left:114.4px;transform:scaleX(0.94);transform-origin:left">Live</span>
<span class="gt" style="top:256.11px;right:408.8px;transform:scaleX(0.97);transform-origin:right">48,000,000</span>
<span class="gt" style="top:256.11px;right:364.8px;transform:scaleX(0.985);transform-origin:right">1.15</span>
<span class="gt" style="top:256.11px;right:302.1px;transform:scaleX(0.9);transform-origin:right">3.0%</span>
<span class="gt" style="top:256.11px;left:444px;transform:scaleX(1.07);transform-origin:left">3/31/2015</span>
<span class="gt" style="top:256.11px;left:568px;transform:scaleX(1.07);transform-origin:left">2/29/2028</span>
<span class="gt" style="top:270.24px;left:23px;width:20px;text-align:center">20</span>
<span class="gt" style="top:270.24px;left:51.6px;transform:scaleX(0.968);transform-origin:left">Fund 20</span>
<span class="gt" style="top:270.24px;left:114.4px;transform:scaleX(0.94);transform-origin:left">Live</span>
<span class="gt" style="top:270.24px;right:408.8px;transform:scaleX(0.97);transform-origin:right">48,000,000</span>
<span class="gt" style="top:270.24px;right:364.8px;transform:scaleX(0.985);transform-origin:right">1.15</span>
<span class="gt" style="top:270.24px;right:302.1px;transform:scaleX(0.9);transform-origin:right">3.0%</span>
<span class="gt" style="top:270.24px;left:444px;transform:scaleX(1.07);transform-origin:left">7/31/2016</span>
<span class="gt" style="top:270.24px;left:568px;transform:scaleX(1.07);transform-origin:left">6/30/2029</span>
<span class="gt" style="top:284.37px;left:23px;width:20px;text-align:center">21</span>
<span class="gt" style="top:284.37px;left:51.6px;transform:scaleX(0.968);transform-origin:left">Fund 21</span>
<span class="gt" style="top:284.37px;left:114.4px;transform:scaleX(0.94);transform-origin:left">Live</span>
<span class="gt" style="top:284.37px;right:408.8px;transform:scaleX(0.97);transform-origin:right">53,333,333</span>
<span class="gt" style="top:284.37px;right:364.8px;transform:scaleX(0.985);transform-origin:right">1.15</span>
<span class="gt" style="top:284.37px;right:302.1px;transform:scaleX(0.9);transform-origin:right">3.0%</span>
<span class="gt" style="top:284.37px;left:444px;transform:scaleX(1.07);transform-origin:left">9/30/2016</span>
<span class="gt" style="top:284.37px;left:568px;transform:scaleX(1.07);transform-origin:left">8/31/2029</span>
<span class="gt" style="top:298.50px;left:23px;width:20px;text-align:center">22</span>
<span class="gt" style="top:298.50px;left:51.6px;transform:scaleX(0.968);transform-origin:left">Fund 22</span>
<span class="gt" style="top:298.50px;left:114.4px;transform:scaleX(0.94);transform-origin:left">Live</span>
<span class="gt" style="top:298.50px;right:408.8px;transform:scaleX(0.97);transform-origin:right">80,160,000</span>
<span class="gt" style="top:298.50px;right:364.8px;transform:scaleX(0.985);transform-origin:right">1.15</span>
<span class="gt" style="top:298.50px;right:302.1px;transform:scaleX(0.9);transform-origin:right">3.0%</span>
<span class="gt" style="top:298.50px;left:444px;transform:scaleX(1.07);transform-origin:left">11/30/2016</span>
<span class="gt" style="top:298.50px;left:568px;transform:scaleX(1.07);transform-origin:left">10/31/2029</span>
<span class="gt" style="top:312.62px;left:23px;width:20px;text-align:center">23</span>
<span class="gt" style="top:312.62px;left:51.6px;transform:scaleX(0.968);transform-origin:left">Fund 23</span>
<span class="gt" style="top:312.62px;left:114.4px;transform:scaleX(0.94);transform-origin:left">Live</span>
<span class="gt" style="top:312.62px;right:408.8px;transform:scaleX(0.97);transform-origin:right">81,730,000</span>
<span class="gt" style="top:312.62px;right:364.8px;transform:scaleX(0.985);transform-origin:right">1.15</span>
<span class="gt" style="top:312.62px;right:302.1px;transform:scaleX(0.9);transform-origin:right">3.0%</span>
<span class="gt" style="top:312.62px;left:444px;transform:scaleX(1.07);transform-origin:left">11/30/2016</span>
<span class="gt" style="top:312.62px;left:568px;transform:scaleX(1.07);transform-origin:left">10/31/2029</span>
<span class="gt" style="top:326.75px;left:23px;width:20px;text-align:center">24</span>
<span class="gt" style="top:326.75px;left:51.6px;transform:scaleX(0.968);transform-origin:left">Fund 24</span>
<span class="gt" style="top:326.75px;left:114.4px;transform:scaleX(0.94);transform-origin:left">Live</span>
<span class="gt" style="top:326.75px;right:408.8px;transform:scaleX(0.97);transform-origin:right">100,000,000</span>
<span class="gt" style="top:326.75px;right:364.8px;transform:scaleX(0.985);transform-origin:right">1.15</span>
<span class="gt" style="top:326.75px;right:302.1px;transform:scaleX(0.9);transform-origin:right">3.0%</span>
<span class="gt" style="top:326.75px;left:444px;transform:scaleX(1.07);transform-origin:left">2/28/2017</span>
<span class="gt" style="top:326.75px;left:568px;transform:scaleX(1.07);transform-origin:left">1/31/2030</span>
<span class="gt" style="top:340.88px;left:23px;width:20px;text-align:center">25</span>
<span class="gt" style="top:340.88px;left:51.6px;transform:scaleX(0.968);transform-origin:left">Fund 25</span>
<span class="gt" style="top:340.88px;left:114.4px;transform:scaleX(0.94);transform-origin:left">Live</span>
<span class="gt" style="top:340.88px;right:408.8px;transform:scaleX(0.97);transform-origin:right">100,000,000</span>
<span class="gt" style="top:340.88px;right:364.8px;transform:scaleX(0.985);transform-origin:right">1.15</span>
<span class="gt" style="top:340.88px;right:302.1px;transform:scaleX(0.9);transform-origin:right">3.0%</span>
<span class="gt" style="top:340.88px;left:444px;transform:scaleX(1.07);transform-origin:left">10/31/2017</span>
<span class="gt" style="top:340.88px;left:568px;transform:scaleX(1.07);transform-origin:left">10/31/2030</span>
<span class="gt" style="top:355.01px;left:23px;width:20px;text-align:center">26</span>
<span class="gt" style="top:355.01px;left:51.6px;transform:scaleX(0.968);transform-origin:left">Fund 26</span>
<span class="gt" style="top:355.01px;left:114.4px;transform:scaleX(0.94);transform-origin:left">Live</span>
<span class="gt" style="top:355.01px;right:408.8px;transform:scaleX(0.97);transform-origin:right">72,000,000</span>
<span class="gt" style="top:355.01px;right:364.8px;transform:scaleX(0.985);transform-origin:right">1.15</span>
<span class="gt" style="top:355.01px;right:302.1px;transform:scaleX(0.9);transform-origin:right">3.0%</span>
<span class="gt" style="top:355.01px;left:444px;transform:scaleX(1.07);transform-origin:left">11/30/2017</span>
<span class="gt" style="top:355.01px;left:568px;transform:scaleX(1.07);transform-origin:left">12/31/2030</span>
<span class="gt" style="top:369.14px;left:23px;width:20px;text-align:center">27</span>
<span class="gt" style="top:369.14px;left:51.6px;transform:scaleX(0.968);transform-origin:left">Fund 27</span>
<span class="gt" style="top:369.14px;left:114.4px;transform:scaleX(0.94);transform-origin:left">Live</span>
<span class="gt" style="top:369.14px;right:408.8px;transform:scaleX(0.97);transform-origin:right">60,000,000</span>
<span class="gt" style="top:369.14px;right:364.8px;transform:scaleX(0.985);transform-origin:right">1.15</span>
<span class="gt" style="top:369.14px;right:302.1px;transform:scaleX(0.9);transform-origin:right">3.0%</span>
<span class="gt" style="top:369.14px;left:444px;transform:scaleX(1.07);transform-origin:left">2/28/2018</span>
<span class="gt" style="top:369.14px;left:568px;transform:scaleX(1.07);transform-origin:left">12/31/2030</span>
<span class="gt" style="top:383.28px;left:23px;width:20px;text-align:center">28</span>
<span class="gt" style="top:383.28px;left:51.6px;transform:scaleX(0.968);transform-origin:left">Fund 28</span>
<span class="gt" style="top:383.28px;left:114.4px;transform:scaleX(0.94);transform-origin:left">Live</span>
<span class="gt" style="top:383.28px;right:408.8px;transform:scaleX(0.97);transform-origin:right">60,000,000</span>
<span class="gt" style="top:383.28px;right:364.8px;transform:scaleX(0.985);transform-origin:right">1.15</span>
<span class="gt" style="top:383.28px;right:302.1px;transform:scaleX(0.9);transform-origin:right">3.0%</span>
<span class="gt" style="top:383.28px;left:444px;transform:scaleX(1.07);transform-origin:left">9/30/2018</span>
<span class="gt" style="top:383.28px;left:568px;transform:scaleX(1.07);transform-origin:left">12/31/2030</span>
<span class="gt" style="top:397.41px;left:23px;width:20px;text-align:center">29</span>
<span class="gt" style="top:397.41px;left:51.6px;transform:scaleX(0.968);transform-origin:left">Fund 29</span>
<span class="gt" style="top:397.41px;left:114.4px;transform:scaleX(0.94);transform-origin:left">Live</span>
<span class="gt" style="top:397.41px;right:408.8px;transform:scaleX(0.97);transform-origin:right">100,000,000</span>
<span class="gt" style="top:397.41px;right:364.8px;transform:scaleX(0.985);transform-origin:right">1.15</span>
<span class="gt" style="top:397.41px;right:302.1px;transform:scaleX(0.9);transform-origin:right">3.0%</span>
<span class="gt" style="top:397.41px;left:444px;transform:scaleX(1.07);transform-origin:left">5/31/2019</span>
<span class="gt" style="top:397.41px;left:568px;transform:scaleX(1.07);transform-origin:left">10/31/2031</span>
<span class="gt" style="top:411.54px;left:23px;width:20px;text-align:center">30</span>
<span class="gt" style="top:411.54px;left:51.6px;transform:scaleX(0.968);transform-origin:left">Fund 30</span>
<span class="gt" style="top:411.54px;left:114.4px;transform:scaleX(0.94);transform-origin:left">Live</span>
<span class="gt" style="top:411.54px;right:408.8px;transform:scaleX(0.97);transform-origin:right">46,666,668</span>
<span class="gt" style="top:411.54px;right:364.8px;transform:scaleX(0.985);transform-origin:right">1.15</span>
<span class="gt" style="top:411.54px;right:302.1px;transform:scaleX(0.9);transform-origin:right">3.0%</span>
<span class="gt" style="top:411.54px;left:444px;transform:scaleX(1.07);transform-origin:left">11/30/2019</span>
<span class="gt" style="top:411.54px;left:568px;transform:scaleX(1.07);transform-origin:left">9/30/2032</span>
<span class="gt" style="top:425.67px;left:23px;width:20px;text-align:center">31</span>
<span class="gt" style="top:425.67px;left:51.6px;transform:scaleX(0.968);transform-origin:left">Fund 31</span>
<span class="gt" style="top:425.67px;left:114.4px;transform:scaleX(0.94);transform-origin:left">Live</span>
<span class="gt" style="top:425.67px;right:408.8px;transform:scaleX(0.97);transform-origin:right">40,000,000</span>
<span class="gt" style="top:425.67px;right:364.8px;transform:scaleX(0.985);transform-origin:right">1.15</span>
<span class="gt" style="top:425.67px;right:302.1px;transform:scaleX(0.9);transform-origin:right">3.0%</span>
<span class="gt" style="top:425.67px;left:444px;transform:scaleX(1.07);transform-origin:left">12/31/2019</span>
<span class="gt" style="top:425.67px;left:568px;transform:scaleX(1.07);transform-origin:left">10/31/2032</span>
<span class="gt" style="top:439.80px;left:23px;width:20px;text-align:center">32</span>
<span class="gt" style="top:439.80px;left:51.6px;transform:scaleX(0.968);transform-origin:left">Fund 32</span>
<span class="gt" style="top:439.80px;left:114.4px;transform:scaleX(0.94);transform-origin:left">Live</span>
<span class="gt" style="top:439.80px;right:408.8px;transform:scaleX(0.97);transform-origin:right">72,000,000</span>
<span class="gt" style="top:439.80px;right:364.8px;transform:scaleX(0.985);transform-origin:right">2.57</span>
<span class="gt" style="top:439.80px;right:302.1px;transform:scaleX(0.9);transform-origin:right">3.0%</span>
<span class="gt" style="top:439.80px;left:444px;transform:scaleX(1.07);transform-origin:left">9/30/2020</span>
<span class="gt" style="top:439.80px;left:568px;transform:scaleX(1.07);transform-origin:left">9/30/2033</span>
<span class="gt" style="top:453.93px;left:23px;width:20px;text-align:center">33</span>
<span class="gt" style="top:453.93px;left:51.6px;transform:scaleX(0.968);transform-origin:left">Fund 33</span>
<span class="gt" style="top:453.93px;left:114.4px;transform:scaleX(0.94);transform-origin:left">Live</span>
<span class="gt" style="top:453.93px;right:408.8px;transform:scaleX(0.97);transform-origin:right">72,270,000</span>
<span class="gt" style="top:453.93px;right:364.8px;transform:scaleX(0.985);transform-origin:right">1.15</span>
<span class="gt" style="top:453.93px;right:302.1px;transform:scaleX(0.9);transform-origin:right">3.0%</span>
<span class="gt" style="top:453.93px;left:444px;transform:scaleX(1.07);transform-origin:left">2/28/2021</span>
<span class="gt" style="top:453.93px;left:568px;transform:scaleX(1.07);transform-origin:left">9/30/2033</span>
</div>
<span class="gh" style="top:216.95px;left:23px;width:20px;text-align:center">#</span>
<span class="gh" style="top:216.95px;left:53px;transform:scaleX(0.96);transform-origin:left">FUND</span>
<span class="gh" style="top:216.95px;left:115.8px;transform:scaleX(0.96);transform-origin:left">STATUS</span>
<span class="gh" style="top:216.95px;left:162.5px;width:93.3px;text-align:center;transform:scaleX(1.027)">COMMITMENT (£)</span>
<span class="gh" style="top:216.95px;left:259px;width:44px;text-align:center;transform:scaleX(0.96)">DPI</span>
<span class="gh" style="top:216.95px;left:302px;width:62.7px;text-align:center;transform:scaleX(0.96)">PR RATE</span>
<span class="gh" style="top:216.95px;left:374px;transform:scaleX(0.96);transform-origin:left">DATES--&gt;</span>
<span class="gh" style="top:216.95px;left:445.3px;transform:scaleX(1.005);transform-origin:left">COMMITMENT START DATE</span>
<span class="gh" style="top:216.95px;left:569.3px;transform:scaleX(0.96);transform-origin:left">END OF FUND LIFE</span><!-- grid scrollbars -->
<div class="abs" style="left:659px;top:212px;width:16px;height:494px;background:#f1f1f1"></div>
<div class="abs" style="left:24px;top:692.5px;width:651px;height:13.5px;background:#f1f1f1"></div>
<div class="abs" style="left:662px;top:226px;width:9.5px;height:265.5px;background:#c1c1c1"></div>
<div class="abs" style="left:37px;top:694px;width:232.5px;height:10px;background:#c1c1c1"></div>
<svg width="700" height="720" viewBox="0 0 700 720">
  <path d="M664 221 l3 -3 l3 3 z" fill="#a3a3a3"/>
  <path d="M664 683.5 l3 3 l3 -3 z" fill="#505050"/>
  <path d="M31.2 696.3 l-2.8 2.5 l2.8 2.5 z" fill="#a3a3a3"/>
  <path d="M649.2 696 l2.8 2.7 l-2.8 2.7 z" fill="#505050"/>
  <path d="M551.8 224.2 v-3.8 l3.8 3.8 z" fill="#9a9a9a"/>
</svg>
<svg width="1500" height="750" viewBox="0 0 1500 750">
<rect x="764.4" y="187.5" width="1" height="158" fill="#efefef"/>
<rect x="764.9" y="345" width="206.6" height="1" fill="#e6e6e6"/>
<rect x="765.3" y="192.70" width="164.10" height="6.9" fill="#91a0dc"/>
<rect x="756.4" y="187.00" width="8.5" height="1" fill="#c6c6c6"/>
<text x="751.6" y="200.00" font-size="12.5" fill="#646464" text-anchor="end" textLength="43.7" lengthAdjust="spacingAndGlyphs">Fund 24</text>
<rect x="765.3" y="208.30" width="164.10" height="6.9" fill="#91a0dc"/>
<rect x="756.4" y="202.82" width="8.5" height="1" fill="#c6c6c6"/>
<text x="751.6" y="215.75" font-size="12.5" fill="#646464" text-anchor="end" textLength="43.7" lengthAdjust="spacingAndGlyphs">Fund 25</text>
<rect x="765.3" y="223.90" width="164.10" height="6.9" fill="#91a0dc"/>
<rect x="756.4" y="218.64" width="8.5" height="1" fill="#c6c6c6"/>
<text x="751.6" y="231.50" font-size="12.5" fill="#646464" text-anchor="end" textLength="43.7" lengthAdjust="spacingAndGlyphs">Fund 29</text>
<rect x="765.3" y="239.50" width="134.12" height="6.9" fill="#91a0dc"/>
<rect x="756.4" y="234.46" width="8.5" height="1" fill="#c6c6c6"/>
<text x="751.6" y="247.25" font-size="12.5" fill="#646464" text-anchor="end" textLength="43.7" lengthAdjust="spacingAndGlyphs">Fund 23</text>
<rect x="765.3" y="255.10" width="131.54" height="6.9" fill="#91a0dc"/>
<rect x="756.4" y="250.28" width="8.5" height="1" fill="#c6c6c6"/>
<text x="751.6" y="263.00" font-size="12.5" fill="#646464" text-anchor="end" textLength="43.7" lengthAdjust="spacingAndGlyphs">Fund 22</text>
<rect x="765.3" y="270.70" width="118.60" height="6.9" fill="#91a0dc"/>
<rect x="756.4" y="266.10" width="8.5" height="1" fill="#c6c6c6"/>
<text x="751.6" y="278.75" font-size="12.5" fill="#646464" text-anchor="end" textLength="43.7" lengthAdjust="spacingAndGlyphs">Fund 33</text>
<rect x="765.3" y="286.30" width="118.15" height="6.9" fill="#91a0dc"/>
<rect x="756.4" y="281.92" width="8.5" height="1" fill="#c6c6c6"/>
<text x="751.6" y="294.50" font-size="12.5" fill="#646464" text-anchor="end" textLength="43.7" lengthAdjust="spacingAndGlyphs">Fund 26</text>
<rect x="765.3" y="301.90" width="118.15" height="6.9" fill="#91a0dc"/>
<rect x="756.4" y="297.74" width="8.5" height="1" fill="#c6c6c6"/>
<text x="751.6" y="310.25" font-size="12.5" fill="#646464" text-anchor="end" textLength="43.7" lengthAdjust="spacingAndGlyphs">Fund 32</text>
<rect x="765.3" y="317.50" width="98.46" height="6.9" fill="#91a0dc"/>
<rect x="756.4" y="313.56" width="8.5" height="1" fill="#c6c6c6"/>
<text x="751.6" y="326.00" font-size="12.5" fill="#646464" text-anchor="end" textLength="43.7" lengthAdjust="spacingAndGlyphs">Fund 34</text>
<rect x="765.3" y="333.10" width="98.46" height="6.9" fill="#91a0dc"/>
<rect x="756.4" y="329.38" width="8.5" height="1" fill="#c6c6c6"/>
<text x="751.6" y="341.75" font-size="12.5" fill="#646464" text-anchor="end" textLength="43.7" lengthAdjust="spacingAndGlyphs">Fund 27</text>
<rect x="756.4" y="345.00" width="8.5" height="1" fill="#c6c6c6"/>
<rect x="764.40" y="345.5" width="1" height="7" fill="#c6c6c6"/>
<text x="765.20" y="364.1" font-size="12.5" fill="#646464" text-anchor="middle">0</text>
<rect x="805.50" y="345.5" width="1" height="7" fill="#c6c6c6"/>
<text x="806.30" y="364.1" font-size="12.5" fill="#646464" text-anchor="middle">25</text>
<rect x="846.60" y="345.5" width="1" height="7" fill="#c6c6c6"/>
<text x="847.40" y="364.1" font-size="12.5" fill="#646464" text-anchor="middle">50</text>
<rect x="887.70" y="345.5" width="1" height="7" fill="#c6c6c6"/>
<text x="888.50" y="364.1" font-size="12.5" fill="#646464" text-anchor="middle">75</text>
<rect x="928.80" y="345.5" width="1" height="7" fill="#c6c6c6"/>
<text x="929.60" y="364.1" font-size="12.5" fill="#646464" text-anchor="middle">100</text>
<rect x="969.90" y="345.5" width="1" height="7" fill="#c6c6c6"/>
<text x="953.2" y="364.1" font-size="12.5" fill="#646464" textLength="14.5" lengthAdjust="spacingAndGlyphs">1...</text>
<text x="841.5" y="383.8" font-size="12.5" fill="#646464" textLength="53" lengthAdjust="spacingAndGlyphs">#,000,000</text>
<circle cx="770.7" cy="407.8" r="6.1" fill="#91a0dc"/>
<text x="783" y="412.4" font-size="12.5" fill="#646464" textLength="131" lengthAdjust="spacingAndGlyphs">Commitment(BP 21/22)</text>
<g fill="#0b5fd0"><path d="M779.30 440.80 h3.4 v0.9 h-0.45 v2.6 l1.25 1.1 v0.75 h-5 v-0.75 l1.25 -1.1 v-2.6 h-0.45 z"/><rect x="780.55" y="446.00" width="0.9" height="2.6"/></g>
<path d="M896.50 443.50 l3 3.1 l3 -3.1" fill="none" stroke="#6e6e6e" stroke-width="0.9"/>
<text x="794.5" y="448.3" font-size="11.2" fill="#4c4c4c" stroke="#4c4c4c" stroke-width="0.45" textLength="93" lengthAdjust="spacingAndGlyphs">2005-06 - 2030-31</text>
<path d="M1119.70 287.30 L1119.70 220.00 A67.30 67.30 0 1 1 1052.62 292.79 Z" fill="#001080" stroke="#fff" stroke-width="1.1"/>
<path d="M1119.70 287.30 L1052.62 292.79 A67.30 67.30 0 0 1 1119.70 220.00 Z" fill="#7aacdf" stroke="#fff" stroke-width="1.1"/>
<text x="1024" y="244.5" font-size="13.3" fill="#646464" textLength="26" lengthAdjust="spacingAndGlyphs">26 %</text>
<text x="1190" y="346.2" font-size="13.3" fill="#646464" textLength="26" lengthAdjust="spacingAndGlyphs">74 %</text>
<path d="M1059.3 236.6 Q1066 236.6 1071 243" fill="none" stroke="#7aacdf" stroke-width="0.9"/>
<path d="M1169.5 332.5 Q1173 339.8 1182.5 340.3" fill="none" stroke="#001080" stroke-width="0.9"/>
<circle cx="1063.6" cy="408" r="6.1" fill="#001080"/>
<text x="1075.5" y="412.4" font-size="12.5" fill="#646464" textLength="22" lengthAdjust="spacingAndGlyphs">Live</text>
<circle cx="1122.6" cy="408" r="6.1" fill="#7aacdf"/>
<text x="1135" y="412.4" font-size="12.5" fill="#646464" textLength="48" lengthAdjust="spacingAndGlyphs">Forecast</text>
<g fill="#0b5fd0"><path d="M1059.30 440.80 h3.4 v0.9 h-0.45 v2.6 l1.25 1.1 v0.75 h-5 v-0.75 l1.25 -1.1 v-2.6 h-0.45 z"/><rect x="1060.55" y="446.00" width="0.9" height="2.6"/></g>
<path d="M1177.70 443.50 l3 3.1 l3 -3.1" fill="none" stroke="#6e6e6e" stroke-width="0.9"/>
<text x="1075" y="448.3" font-size="11.2" fill="#4c4c4c" stroke="#4c4c4c" stroke-width="0.45" textLength="93" lengthAdjust="spacingAndGlyphs">2006-07 - 2030-31</text>
<path d="M1366.30 216.20 A55.80 55.80 0 0 1 1407.92 309.16 L1387.34 290.78 A28.20 28.20 0 0 0 1366.30 243.80 Z" fill="#001080" stroke="#fff" stroke-width="1.1"/>
<path d="M1407.92 309.16 A55.80 55.80 0 0 1 1313.92 291.23 L1339.83 281.72 A28.20 28.20 0 0 0 1387.34 290.78 Z" fill="#7aacdf" stroke="#fff" stroke-width="1.1"/>
<path d="M1313.92 291.23 A55.80 55.80 0 0 1 1366.30 216.20 L1366.30 243.80 A28.20 28.20 0 0 0 1339.83 281.72 Z" fill="#c4c4c4" stroke="#fff" stroke-width="1.1"/>
<text x="1439.5" y="253.4" font-size="13.3" fill="#646464" textLength="25.5" lengthAdjust="spacingAndGlyphs">37 %</text>
<text x="1272.3" y="243.7" font-size="13.3" fill="#646464" textLength="26" lengthAdjust="spacingAndGlyphs">31 %</text>
<text x="1314.8" y="344" font-size="13.3" fill="#646464" textLength="25.5" lengthAdjust="spacingAndGlyphs">33 %</text>
<path d="M1416.5 249.3 Q1424 248.5 1430.5 245.3" fill="none" stroke="#001080" stroke-width="0.9"/>
<path d="M1307.4 234.6 Q1314.5 234.8 1319.8 240.4" fill="none" stroke="#c4c4c4" stroke-width="0.9"/>
<path d="M1349.3 335.9 Q1354.8 334.2 1355.7 327.6" fill="none" stroke="#7aacdf" stroke-width="0.9"/>
<circle cx="1302.5" cy="389.5" r="6.1" fill="#001080"/>
<text x="1314.8" y="394.4" font-size="12.5" fill="#646464" textLength="25.5" lengthAdjust="spacingAndGlyphs">High</text>
<circle cx="1384.8" cy="389.5" r="6.1" fill="#7aacdf"/>
<text x="1396.7" y="394.4" font-size="12.5" fill="#646464" textLength="45" lengthAdjust="spacingAndGlyphs">Medium</text>
<circle cx="1302.5" cy="408" r="6.1" fill="#c4c4c4"/>
<text x="1314.8" y="412.4" font-size="12.5" fill="#646464" textLength="22.5" lengthAdjust="spacingAndGlyphs">Low</text>
<g fill="#0b5fd0"><path d="M1307.90 440.80 h3.4 v0.9 h-0.45 v2.6 l1.25 1.1 v0.75 h-5 v-0.75 l1.25 -1.1 v-2.6 h-0.45 z"/><rect x="1309.15" y="446.00" width="0.9" height="2.6"/></g>
<path d="M1426.20 443.50 l3 3.1 l3 -3.1" fill="none" stroke="#6e6e6e" stroke-width="0.9"/>
<text x="1323.6" y="448.3" font-size="11.2" fill="#4c4c4c" stroke="#4c4c4c" stroke-width="0.45" textLength="93" lengthAdjust="spacingAndGlyphs">2006-07 - 2030-31</text>
<rect x="693.2" y="517.9" width="417.6" height="61.5" fill="#f0f1f2"/>
<rect x="860" y="549.7" width="250.8" height="1.1" fill="#fafafa"/>
<rect x="941.7" y="550.5" width="1.1" height="29" fill="#fafafa"/>
<rect x="941.7" y="579.4" width="1" height="59.5" fill="#e6e6e6"/>
<rect x="1025.9" y="550.5" width="1.1" height="29" fill="#fafafa"/>
<rect x="1025.9" y="579.4" width="1" height="59.5" fill="#e6e6e6"/>
<rect x="693.2" y="578.9" width="417.6" height="1" fill="#e4e4e4"/>
<rect x="693.2" y="608.7" width="417.6" height="1" fill="#e4e4e4"/>
<rect x="693.2" y="638.4" width="417.6" height="1" fill="#e4e4e4"/>
<rect x="859.2" y="517.9" width="1.7" height="121.3" fill="#8d9196"/>
<text x="709" y="553.9" font-size="14.2" fill="#474747" textLength="30" lengthAdjust="spacingAndGlyphs">FUND</text>
<text x="954.1" y="537.8" font-size="14.2" fill="#474747" textLength="62.3" lengthAdjust="spacingAndGlyphs">ACCOUNTS</text>
<text x="908.8" y="568.1" font-size="14.2" fill="#474747" textLength="18.7" lengthAdjust="spacingAndGlyphs">DPI</text>
<text x="996" y="568.1" font-size="14.2" fill="#474747" textLength="15.6" lengthAdjust="spacingAndGlyphs">PR</text>
<text x="1066.3" y="568.1" font-size="14.2" fill="#474747" textLength="28.9" lengthAdjust="spacingAndGlyphs">DATE</text>
<text x="709" y="597.3" font-size="14.2" fill="#404040" textLength="46.7" lengthAdjust="spacingAndGlyphs">Fund 32</text>
<text x="709" y="627" font-size="14.2" fill="#404040" textLength="46.7" lengthAdjust="spacingAndGlyphs">Fund 43</text>
<text x="902" y="597.3" font-size="14.2" fill="#d63a3f" textLength="24.9" lengthAdjust="spacingAndGlyphs">2.57</text>
<text x="975.6" y="627" font-size="14.2" fill="#d63a3f" textLength="34.6" lengthAdjust="spacingAndGlyphs">5.10%</text>
<g fill="#0b5fd0"><path d="M863.80 720.50 h3.4 v0.9 h-0.45 v2.6 l1.25 1.1 v0.75 h-5 v-0.75 l1.25 -1.1 v-2.6 h-0.45 z"/><rect x="865.05" y="725.70" width="0.9" height="2.6"/></g>
<path d="M936.60 723.20 l3 3.1 l3 -3.1" fill="none" stroke="#6e6e6e" stroke-width="0.9"/>
<text x="880" y="728" font-size="11.2" fill="#4c4c4c" stroke="#4c4c4c" stroke-width="0.45" textLength="47.5" lengthAdjust="spacingAndGlyphs">Aug 2021</text>
<rect x="1199.9" y="514.09" width="1" height="112.71" fill="#eeeeee"/>
<rect x="1200.4" y="626.3" width="268.9" height="1" fill="#efefef"/>
<rect x="1191.4" y="626.30" width="9" height="1" fill="#c9c9c9"/>
<text x="1187.2" y="631.80" font-size="12.5" fill="#646464" text-anchor="end">0</text>
<rect x="1191.4" y="588.73" width="9" height="1" fill="#c9c9c9"/>
<text x="1187.2" y="594.23" font-size="12.5" fill="#646464" text-anchor="end">100</text>
<rect x="1191.4" y="551.16" width="9" height="1" fill="#c9c9c9"/>
<text x="1187.2" y="556.66" font-size="12.5" fill="#646464" text-anchor="end">200</text>
<rect x="1191.4" y="513.59" width="9" height="1" fill="#c9c9c9"/>
<text x="1187.2" y="519.09" font-size="12.5" fill="#646464" text-anchor="end">300</text>
<text transform="translate(1158 570.5) rotate(-90)" font-size="12.5" fill="#646464" text-anchor="middle" textLength="53" lengthAdjust="spacingAndGlyphs">#,000,000</text>
<rect x="1199.90" y="626.8" width="1" height="7.5" fill="#c6c6c6"/>
<rect x="1253.20" y="626.8" width="1" height="7.5" fill="#c6c6c6"/>
<rect x="1306.60" y="626.8" width="1" height="7.5" fill="#c6c6c6"/>
<rect x="1360.80" y="626.8" width="1" height="7.5" fill="#c6c6c6"/>
<rect x="1414.40" y="626.8" width="1" height="7.5" fill="#c6c6c6"/>
<rect x="1468.80" y="626.8" width="1" height="7.5" fill="#c6c6c6"/>
<rect x="1213.20" y="547.15" width="12.4" height="79.65" fill="#001080"/>
<rect x="1229.20" y="547.15" width="12.4" height="79.65" fill="#7aacdf"/>
<text transform="translate(1228.60 645.80) rotate(-19.5)" font-size="12.5" fill="#646464" text-anchor="end" textLength="44.7" lengthAdjust="spacingAndGlyphs">2021-22</text>
<rect x="1266.50" y="595.99" width="12.4" height="30.81" fill="#001080"/>
<rect x="1282.90" y="595.99" width="12.4" height="30.81" fill="#7aacdf"/>
<text transform="translate(1281.90 645.80) rotate(-19.5)" font-size="12.5" fill="#646464" text-anchor="end" textLength="44.7" lengthAdjust="spacingAndGlyphs">2022-23</text>
<rect x="1320.20" y="586.60" width="12.4" height="40.20" fill="#001080"/>
<rect x="1336.10" y="584.72" width="12.4" height="42.08" fill="#7aacdf"/>
<text transform="translate(1335.30 645.80) rotate(-19.5)" font-size="12.5" fill="#646464" text-anchor="end" textLength="44.7" lengthAdjust="spacingAndGlyphs">2023-24</text>
<rect x="1373.70" y="586.60" width="12.4" height="40.20" fill="#001080"/>
<rect x="1390.70" y="586.60" width="12.4" height="40.20" fill="#7aacdf"/>
<text transform="translate(1389.50 645.80) rotate(-19.5)" font-size="12.5" fill="#646464" text-anchor="end" textLength="44.7" lengthAdjust="spacingAndGlyphs">2024-25</text>
<rect x="1428.00" y="586.60" width="12.4" height="40.20" fill="#001080"/>
<rect x="1444.00" y="616.28" width="12.4" height="10.52" fill="#7aacdf"/>
<text transform="translate(1443.10 645.80) rotate(-19.5)" font-size="12.5" fill="#646464" text-anchor="end" textLength="44.7" lengthAdjust="spacingAndGlyphs">2025-26</text>
<circle cx="1237.2" cy="684.5" r="6.2" fill="#001080"/>
<circle cx="1237.2" cy="703.5" r="6.2" fill="#7aacdf"/>
<text x="1249" y="689.5" font-size="12.5" fill="#646464" textLength="132.5" lengthAdjust="spacingAndGlyphs">Commitment(BP 21/22)</text>
<text x="1249" y="708.5" font-size="12.5" fill="#646464" textLength="132.5" lengthAdjust="spacingAndGlyphs">Commitment(BP 20/21)</text>
</svg><!-- page scrollbar -->
<div class="abs" style="left:1493.5px;top:125px;width:7px;height:608px;background:#f1f1f1"></div>
<div class="abs" style="left:1494.5px;top:138px;width:6px;height:555.5px;background:#c1c1c1"></div>
<svg width="1500" height="750" viewBox="0 0 1500 750"><path d="M1496.5 132.5 l3.5 -3.6 v3.6 z" fill="#8a8a8a"/><path d="M1498 725 l2 2.2 v-2.2 z" fill="#505050"/></svg>
<!-- footer -->
<div class="abs" style="left:0;top:733px;width:1500px;height:17px;background:#fff;border-top:1px solid #e6e6e6"></div>
<div class="abs" style="left:304px;top:737px;width:1px;height:13px;background:#dfdfdf"></div>
<svg width="1500" height="750" viewBox="0 0 1500 750">
<text x="12" y="746.2" font-size="9.6" fill="#666" textLength="282" lengthAdjust="spacingAndGlyphs">© 2021 Workday, Inc. All rights reserved. Proprietary and Confidential</text>
<text x="314.7" y="746.2" font-size="9.6" fill="#4a7fc4" textLength="56.5" lengthAdjust="spacingAndGlyphs">Privacy Policy</text>
</svg>
</body></html>
